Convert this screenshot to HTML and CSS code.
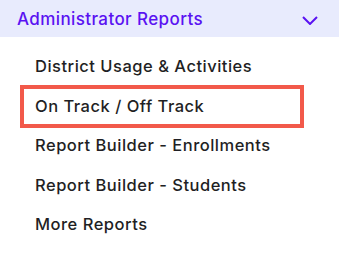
FILE: index.html
```html
<!DOCTYPE html>
<html lang="en">
<head>
  <meta charset="UTF-8">
  <title>Administrator Reports</title>
  <link rel="stylesheet" href="styles.css">
</head>
<body>
  <div class="reports-menu">
    <div class="menu-header">
      <span class="menu-title">Administrator Reports</span>
      <svg class="chevron" viewBox="0 0 16 9">
        <path d="M1 1l7 7 7-7"/>
      </svg>
    </div>
    <ul class="menu-list">
      <li class="menu-item">District Usage &amp; Activities</li>
      <li class="menu-item highlight">On Track / Off Track</li>
      <li class="menu-item">Report Builder - Enrollments</li>
      <li class="menu-item">Report Builder - Students</li>
      <li class="menu-item">More Reports</li>
    </ul>
  </div>
</body>
</html>
```

FILE: styles.css
```css
* {
  margin: 0;
  padding: 0;
  box-sizing: border-box;
  font-family: Inter, 'Noto Sans', sans-serif;
}

body {
  background-color: #fff;
  width: 339px;
  height: 255px;
  overflow: hidden;
}

.menu-header {
  height: 37px;
  background-color: #e8ebfd;
  display: flex;
  align-items: center;
  justify-content: space-between;
  padding: 0 21px 0 17px;
}

.menu-title {
  color: #5a12f2;
  font-size: 17px;
  font-weight: 500;
  letter-spacing: 0.4px;
}

.chevron {
  width: 16px;
  height: 9px;
  margin-top: 4px;
  fill: none;
  stroke: #5a12f2;
  stroke-width: 2;
}

.menu-list {
  list-style: none;
  padding-top: 10px;
}

.menu-item {
  height: 39.6px;
  line-height: 39.6px;
  padding-left: 35px;
  color: #1f1f24;
  font-size: 16.5px;
  font-weight: 500;
  letter-spacing: 0.5px;
}

.highlight {
  margin-left: 22px;
  width: 280px;
  padding-left: 13px;
  outline: 4.5px solid #f2594a;
  outline-offset: -2.5px;
}
```
